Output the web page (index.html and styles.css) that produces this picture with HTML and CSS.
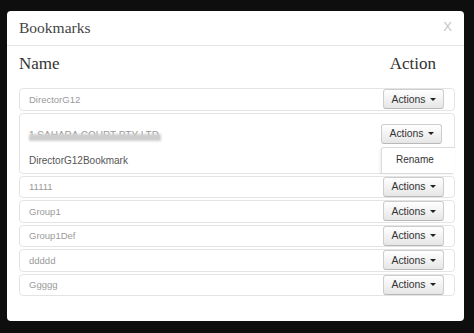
FILE: index.html
```html
<!DOCTYPE html>
<html>
<head>
<meta charset="utf-8">
<link rel="stylesheet" href="styles.css">
</head>
<body>
<div class="modal">
  <div class="modal-header">
    <span class="title">Bookmarks</span>
    <span class="close">X</span>
  </div>
  <div class="modal-body">
    <div class="col-heads">
      <span>Name</span>
      <span class="action-head">Action</span>
    </div>
    <div class="list">
      <div class="row">
        <span class="name">DirectorG12</span>
        <span class="btn">Actions <i class="caret"></i></span>
      </div>
      <div class="row row-open">
        <div class="open-left">
          <span class="redacted">1 SAHARA COURT PTY LTD</span>
          <span class="bm-label">DirectorG12Bookmark</span>
        </div>
        <div class="open-right">
          <span class="btn">Actions <i class="caret"></i></span>
          <div class="menu">Rename</div>
        </div>
      </div>
      <div class="row">
        <span class="name">11111</span>
        <span class="btn">Actions <i class="caret"></i></span>
      </div>
      <div class="row">
        <span class="name">Group1</span>
        <span class="btn">Actions <i class="caret"></i></span>
      </div>
      <div class="row">
        <span class="name">Group1Def</span>
        <span class="btn">Actions <i class="caret"></i></span>
      </div>
      <div class="row">
        <span class="name">ddddd</span>
        <span class="btn">Actions <i class="caret"></i></span>
      </div>
      <div class="row">
        <span class="name">Ggggg</span>
        <span class="btn">Actions <i class="caret"></i></span>
      </div>
    </div>
  </div>
</div>
</body>
</html>
```

FILE: styles.css
```css
html, body {
  margin: 0;
  padding: 0;
  background: #0e0e0e;
  width: 474px;
  height: 333px;
  overflow: hidden;
}
.modal {
  margin: 11px 10px 0 7px;
  height: 310px;
  background: #fff;
  border-radius: 4px;
  box-sizing: border-box;
}
.modal-header {
  height: 34px;
  border-bottom: 1px solid #e6e6e6;
  display: flex;
  align-items: center;
  justify-content: space-between;
  padding: 0 12px 0 12px;
}
.title {
  font-family: "Liberation Serif", serif;
  font-size: 15.5px;
  color: #444;
}
.close {
  font-family: "Liberation Sans", sans-serif;
  font-size: 13px;
  color: #c4c4c4;
  margin-top: -4px;
}
.modal-body {
  padding: 0 9px 0 12px;
}
.col-heads {
  height: 36px;
  margin-bottom: 6px;
  display: flex;
  align-items: center;
  justify-content: space-between;
  font-family: "Liberation Serif", serif;
  font-size: 17px;
  color: #333;
}
.action-head {
  margin-right: 19px;
}
.list {
  display: flex;
  flex-direction: column;
  gap: 2px;
}
.row {
  height: 22.5px;
  box-sizing: border-box;
  border: 1px solid #e4e4e4;
  border-radius: 4px;
  display: flex;
  align-items: center;
  justify-content: space-between;
  padding: 0 10px 0 9px;
  font-family: "Liberation Sans", sans-serif;
}
.name {
  font-size: 9.5px;
  color: #9a9a9a;
}
.btn {
  width: 61px;
  height: 20px;
  box-sizing: border-box;
  border: 1px solid #cdcdcd;
  border-bottom-color: #b8b8b8;
  border-radius: 3px;
  background: linear-gradient(#ffffff, #e6e6e6);
  display: flex;
  align-items: center;
  justify-content: center;
  gap: 4px;
  font-size: 10.4px;
  color: #333;
}
.caret {
  width: 0;
  height: 0;
  border-left: 3px solid transparent;
  border-right: 3px solid transparent;
  border-top: 3px solid #222;
}
.row-open {
  height: 61px;
  align-items: stretch;
  padding-right: 11px;
}
.open-left {
  display: flex;
  flex-direction: column;
  padding-top: 17px;
  gap: 14px;
}
.redacted {
  position: relative;
  font-size: 10px;
  color: #999;
  line-height: 10px;
  height: 10px;
  overflow: visible;
}
.redacted::after {
  content: "";
  position: absolute;
  left: 0;
  right: -2px;
  top: 3.5px;
  height: 7px;
  background: #cdcdcd;
  filter: blur(1.2px);
}
.bm-label {
  font-size: 10px;
  color: #555;
}
.open-right {
  display: flex;
  flex-direction: column;
  align-items: flex-start;
  padding-top: 10px;
  margin-right: -12px;
}
.menu {
  margin-top: 3px;
  width: 74px;
  flex: 1;
  box-sizing: border-box;
  background: #fff;
  border-top: 1px solid #dcdcdc;
  border-left: 1px solid #dcdcdc;
  border-top-left-radius: 3px;
  box-shadow: -1px 1px 3px rgba(0,0,0,0.08);
  font-size: 10px;
  color: #333;
  padding-top: 6px;
  padding-left: 14px;
}
```
